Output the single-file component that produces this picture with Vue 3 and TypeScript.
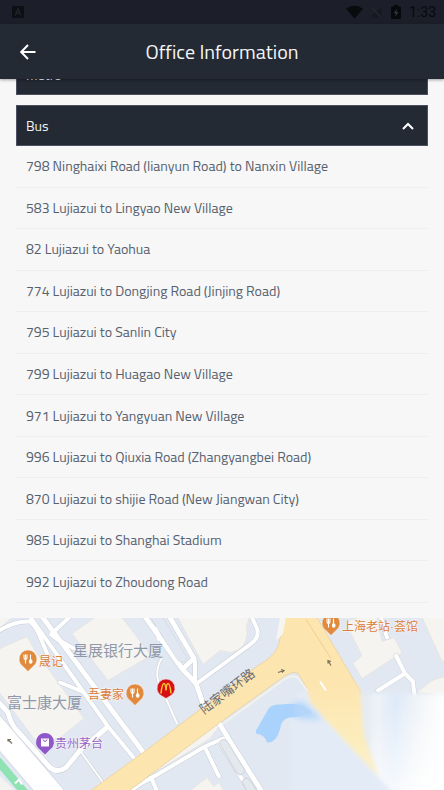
<script setup lang="ts">
import { ref } from 'vue'

const busOpen = ref(true)
const metroOpen = ref(false)

const busRoutes: string[] = [
  '798 Ninghaixi Road (lianyun Road) to Nanxin Village',
  '583 Lujiazui to Lingyao New Village',
  '82 Lujiazui to Yaohua',
  '774 Lujiazui to Dongjing Road (Jinjing Road)',
  '795 Lujiazui to Sanlin City',
  '799 Lujiazui to Huagao New Village',
  '971 Lujiazui to Yangyuan New Village',
  '996 Lujiazui to Qiuxia Road (Zhangyangbei Road)',
  '870 Lujiazui to shijie Road (New Jiangwan City)',
  '985 Lujiazui to Shanghai Stadium',
  '992 Lujiazui to Zhoudong Road',
]

// Casing is drawn below all fills so that junctions stay open.
const roads: { d: string; w: number }[] = [
  { d: 'M-4 632Q14 620 30 621Q37 626 42 641L48 655', w: 4 },
  { d: 'M27 612L108 726L136 760', w: 4 },
  { d: 'M39 612L145 754', w: 5 },
  { d: 'M72 614L51 634L56 638L74 648', w: 4 },
  { d: 'M60 682L70 686L82 691', w: 4 },
  { d: 'M-3 700L8 712Q11 724 17 730L50 767Q57 773 66 767L80 750L107 727', w: 5 },
  { d: 'M80 750L106 786', w: 2 },
  { d: 'M142 612L182 668L196 683L204 706', w: 5 },
  { d: 'M167 612L194 658L183 668', w: 5 },
  { d: 'M195 661L195 680', w: 4 },
  { d: 'M198 682L250 644Q260 637 257 628L252 617', w: 4 },
  { d: 'M153 614Q159 625 158 639', w: 3 },
  { d: 'M162 657Q155 669 158 680L177 723', w: 2 },
  { d: 'M218 721L232 744L265 796', w: 5 },
  { d: 'M223 738L205 746L154 776L145 781', w: 4 },
  { d: 'M205 747L219 776', w: 4 },
  { d: 'M220 742L249 790', w: 4 },
  { d: 'M151 777L159 795', w: 4 },
  { d: 'M130 791L151 777', w: 3 },
  { d: 'M381 617L387 637', w: 4 },
  { d: 'M396 655L405 673L413 681L415 700', w: 4 },
  { d: 'M405 673L378 690', w: 4 },
]
</script>

<template>
  <div class="screen">
    <div class="status-bar">
      <svg class="app-badge" viewBox="0 0 12 12" aria-hidden="true">
        <rect width="12" height="12" rx="2" fill="#0e0f14" />
        <path d="M3.2 9.5L6 2.8L8.8 9.5M4.3 7.2H7.7" fill="none" stroke="#23262f" stroke-width="1.2" />
      </svg>
      <div class="status-right">
        <svg class="wifi" viewBox="0 0 18 14" aria-hidden="true">
          <path d="M0 3.5Q9 -3 18 3.5L9 14Z" fill="#0a0b0f" />
        </svg>
        <svg class="signal" viewBox="0 0 12 14" aria-hidden="true">
          <path d="M11 1V13H1V10Z" fill="#171922" />
          <path d="M1 2L11 13" stroke="#252832" stroke-width="1.4" />
        </svg>
        <svg class="battery" viewBox="0 0 10 14" aria-hidden="true">
          <path d="M3 0H7V1.5H9Q10 1.5 10 2.5V13Q10 14 9 14H1Q0 14 0 13V2.5Q0 1.5 1 1.5H3Z" fill="#08090c" />
          <path d="M5.8 3.5L2.8 8.3H4.8L4.3 12L7.3 7H5.3Z" fill="#343844" />
        </svg>
        <span class="clock">1:33</span>
      </div>
    </div>

    <header class="app-bar">
      <button class="back" type="button" aria-label="Back">
        <svg viewBox="0 0 16 16" aria-hidden="true">
          <path d="M15.5 8H1.500M8 1L1.200 8L8 15" fill="none" stroke="#fff" stroke-width="2" />
        </svg>
      </button>
      <h1>Office Information</h1>
    </header>

    <main class="content">
      <section class="panel">
        <button class="panel-head" type="button" :aria-expanded="metroOpen" @click="metroOpen = !metroOpen">
          <span>Metro</span>
          <svg class="chevron down" viewBox="0 0 12 8" aria-hidden="true">
            <path d="M1 7L6 2L11 7" fill="none" stroke="#fff" stroke-width="2" />
          </svg>
        </button>
      </section>
      <section class="panel">
        <button class="panel-head" type="button" :aria-expanded="busOpen" @click="busOpen = !busOpen">
          <span>Bus</span>
          <svg class="chevron" viewBox="0 0 12 8" aria-hidden="true">
            <path d="M1 7L6 2L11 7" fill="none" stroke="#fff" stroke-width="2" />
          </svg>
        </button>
        <ul v-if="busOpen" class="routes">
          <li v-for="route in busRoutes" :key="route">{{ route }}</li>
        </ul>
      </section>
    </main>

    <svg class="map" viewBox="0 617 444 173" preserveAspectRatio="xMidYMid slice" role="img" aria-label="Office map">
      <defs>
        <filter id="soft" x="-30%" y="-30%" width="160%" height="160%"><feGaussianBlur stdDeviation="3" /></filter>
        <filter id="edge" x="-30%" y="-30%" width="160%" height="160%"><feGaussianBlur stdDeviation="2" /></filter>
        <linearGradient id="haze" gradientUnits="userSpaceOnUse" x1="355" y1="0" x2="444" y2="0">
          <stop offset="0" stop-color="#eeeeec" />
          <stop offset="0.12" stop-color="#e4eaf3" />
          <stop offset="0.25" stop-color="#eff3f8" />
          <stop offset="0.45" stop-color="#deeaf9" />
          <stop offset="0.66" stop-color="#ecf1f7" />
          <stop offset="0.85" stop-color="#f7f8f9" />
          <stop offset="1" stop-color="#fefefe" />
        </linearGradient>
        <linearGradient id="lift" gradientUnits="userSpaceOnUse" x1="395" y1="705" x2="444" y2="770">
          <stop offset="0" stop-color="#fff" stop-opacity="0" />
          <stop offset="1" stop-color="#fff" stop-opacity="0.9" />
        </linearGradient>
        <linearGradient id="fall" x1="0" y1="0" x2="0" y2="1">
          <stop offset="0" stop-color="#fde5b0" />
          <stop offset="0.6" stop-color="#fcedbd" />
          <stop offset="1" stop-color="#fbf1d0" />
        </linearGradient>
        <linearGradient id="water" gradientUnits="userSpaceOnUse" x1="285" y1="0" x2="325" y2="0">
          <stop offset="0" stop-color="#a9d2fd" />
          <stop offset="0.4" stop-color="#a5cffb" />
          <stop offset="1" stop-color="#d3e5f9" />
        </linearGradient>
        <g id="food">
          <path d="M0 12L-5 7A9 9 0 1 1 5 7Z" fill="#e18a3d" stroke="#fff" stroke-width="0.5" />
          <path d="M-4 -5V-2Q-4 0 -2.500 0Q-1 0 -1 -2V-5M-2.500 -5V4" fill="none" stroke="#fff" stroke-width="1.1" />
          <path d="M2.500 -5V1" stroke="#fff" stroke-width="1.1" />
          <ellipse cx="2.700" cy="2" rx="1.800" ry="2.300" fill="#fff" />
        </g>
      </defs>

      <rect x="-100" y="500" width="700" height="400" fill="#e1e8f2" />

      <g fill="#f5f4f1" stroke="#e6e3df" stroke-width="0.8">
        <path d="M-2 649L27 636L35 650L84 718L59 738L36 741L-2 690Z" />
        <path d="M72 633L95 617H122L151 655L108 680Z" />
        <path d="M-2 612H18L-2 629Z" />
        <path d="M175 612H252Q245 624 247 633Q246 649 231 652L220 650L203 664Z" />
        <path d="M158 770L210 738L221 724L216 722L150 769Z" />
        <path d="M188 792L207 777L214 786L219 782L225 792Z" />
        <path d="M345 621L376 612L382 641L394 637L402 652L362 678L353 663L362 655Z" />
        <path d="M419 610L442 661L450 658V610Z" />
        <path d="M417 692L432 680L450 674V695Z" />
      </g>

      <g fill="none" stroke="#c9ced7" stroke-linecap="round" stroke-linejoin="round">
        <path v-for="road in roads" :key="road.d" :d="road.d" :stroke-width="road.w + 1" />
        <path d="M-12 719L62 805" stroke-width="24" />
      </g>
      <g fill="none" stroke="#fff" stroke-linecap="round" stroke-linejoin="round">
        <path v-for="road in roads" :key="road.d" :d="road.d" :stroke-width="road.w" />
        <path d="M-12 719L62 805" stroke-width="23" />
      </g>
      <path d="M-4 772L14 789L8 795H-4Z" fill="#f3f3ef" />
      <path d="M-5 757L27 795" fill="none" stroke="#8fe2b1" stroke-width="8" />
      <path d="M15 783L19 779L22 784" fill="none" stroke="#fff" stroke-width="2" />
      <path d="M219 742Q223 736 228 742L245 770Q240 780 234 768Z" fill="#e4e9ee" stroke="#cdd2da" />
      <path d="M242 781Q246 774 251 781L259 794H249Z" fill="#e4e9ee" stroke="#cdd2da" />
      <path d="M151 617Q170 648 178 660Q184 664 187 657L163 617Z" fill="#e1e8f2" stroke="#cdd2da" stroke-width="0.5" />

      <path
        d="M84 795L150 747L200 709L258 665Q279 654 280 638L284 612H314L360 690V705L310 700L308 690L299 674Q295 669 284 676L220 722L120 797Z"
        fill="#fde5b0" stroke="#ecd5a6" stroke-width="1"
      />
      <path d="M276 640L281 612H287L283 633Q280 637 276 640Z" fill="#f7f5f0" />
      <path d="M306 619L331 658" fill="none" stroke="#ecc985" stroke-width="0.8" />
      <path d="M222 724L284 679Q295 672 300 680L308 691" fill="none" stroke="#f3f1ec" stroke-width="2" />

      <path d="M300 693H470V810H300Z" fill="url(#haze)" filter="url(#edge)" />
      <path d="M370 693H470V810H370Z" fill="url(#lift)" />
      <path d="M308 694L312 684H356L360 692L364 735L379 777L368 770L335 731L309 703Z" fill="url(#fall)" filter="url(#edge)" />
      <path d="M320 681L326 690" stroke="#fff" stroke-width="2" />
      <path d="M300 692L307 692L309 702L323 718L350 747L372 770L400 800H290V712Z" fill="#e3ebf6" filter="url(#edge)" />
      <path
        d="M256 730L267 711Q270 703 281 704Q295 702 304 706L312 712Q300 717 289 717Q281 719 280 729Q276 743 267 742Q266 735 256 733Z"
        fill="url(#water)"
      />
      <path d="M293 702L304 702L322 719L300 718L292 714Z" fill="#b4d6fa" filter="url(#soft)" />

      <g fill="none" stroke="#77705c" stroke-width="1.2">
        <path d="M278 672L284 670M281 669L284 670L282 672" />
        <path d="M331 665L328 660M328 663L328 660L331 661" />
        <path d="M12 743L8 739M8 741L8 739L11 739" />
      </g>

      <use href="#food" x="28" y="659" />
      <use href="#food" x="135" y="693" />
      <use href="#food" x="331" y="623" />

      <path d="M45 754L40 749A9 9 0 1 1 50 749Z" fill="#9057c9" />
      <path d="M41 738H49V746H41Z" fill="#fff" />
      <path d="M43 739Q45 743 47 739" fill="none" stroke="#9057c9" stroke-width="1" />

      <path d="M166 698L161 695A9 9 0 1 1 171 695Z" fill="#d50f16" stroke="#f1e8eb" stroke-width="0.6" />
      <path d="M161 693Q162 683 164 683Q165.500 683 166 690Q166.500 683 168 683Q170 683 171 693" fill="none" stroke="#ffc629" stroke-width="1.500" />

      <g class="building-name">
        <text x="73" y="655">星展银行大厦</text>
        <text x="7" y="707">富士康大厦</text>
      </g>
      <g class="poi">
        <text x="39" y="665">晟记</text>
        <text x="88" y="698">吾妻家</text>
        <text x="342" y="630">上海老站·荟馆</text>
        <text class="shop" x="55" y="747">贵州茅台</text>
      </g>
      <text class="street" transform="translate(204 714) rotate(-37)">陆家嘴环路</text>
    </svg>
  </div>
</template>

<style>
body {
  margin: 0;
  background: #f7f7f7;
}
</style>

<style scoped>
.screen {
  display: flex;
  flex-direction: column;
  min-height: 100vh;
  background: #f7f7f7;
  font-family: "Titillium Web", "Noto Sans", "Noto Sans CJK SC", sans-serif;
}

.status-bar {
  display: flex;
  align-items: center;
  justify-content: space-between;
  box-sizing: border-box;
  height: 24px;
  padding: 0 8px 0 12px;
  background: #1c1e29;
  position: relative;
  z-index: 2;
}

.app-badge {
  width: 12px;
  height: 12px;
}

.status-right {
  display: flex;
  align-items: center;
  gap: 8px;
}

.wifi {
  width: 17px;
  height: 14px;
}

.signal {
  width: 12px;
  height: 13px;
}

.battery {
  width: 10px;
  height: 14px;
}

.clock {
  color: #08090d;
  font-family: Roboto, sans-serif;
  font-size: 14px;
  line-height: 24px;
}

.app-bar {
  display: grid;
  grid-template-columns: 56px 1fr 56px;
  align-items: center;
  height: 55px;
  background: #232a34;
  box-shadow: 0 1px 3px rgba(0, 0, 0, 0.35);
  position: relative;
  z-index: 2;
}

.back {
  display: flex;
  align-items: center;
  justify-content: center;
  height: 48px;
  padding: 0;
  border: 0;
  background: none;
}

.back svg {
  width: 16px;
  height: 16px;
}

h1 {
  margin: 0;
  color: #f4f5f7;
  font-size: 20px;
  font-weight: 400;
  line-height: 24px;
  text-align: center;
}

.content {
  display: flex;
  flex-direction: column;
  gap: 10px;
  margin-top: -25px;
  padding: 0 16px 15px;
}

.panel-head {
  display: flex;
  align-items: center;
  justify-content: space-between;
  box-sizing: border-box;
  width: 100%;
  height: 41px;
  padding: 0 13px 0 9px;
  border: 1px solid #4d4f62;
  background: #232a34;
  color: #f4f5f7;
  font-family: inherit;
  font-size: 14px;
  line-height: 20px;
}

.chevron {
  width: 12px;
  height: 8px;
}

.chevron.down {
  transform: rotate(180deg);
}

.routes {
  display: grid;
  grid-auto-rows: 1fr;
  min-height: 457px;
  margin: 0;
  padding: 0;
  list-style: none;
}

.routes li {
  display: flex;
  align-items: center;
  padding: 0 10px;
  border-bottom: 1px solid #eeeff0;
  color: #566170;
  font-size: 14px;
  line-height: 20px;
}

.map {
  display: block;
  flex: 1 0 172px;
  width: 100%;
  min-height: 0;
}

.map text {
  font-family: "Liberation Sans", "Noto Sans CJK SC", sans-serif;
}

.building-name {
  fill: #8f98aa;
  font-size: 15px;
}

.poi {
  fill: #d9803e;
  stroke: #fbf8f5;
  stroke-width: 1px;
  paint-order: stroke;
  font-size: 12px;
}

.shop {
  fill: #9766c8;
}

.street {
  fill: #6c6d72;
  font-size: 13px;
}
</style>
